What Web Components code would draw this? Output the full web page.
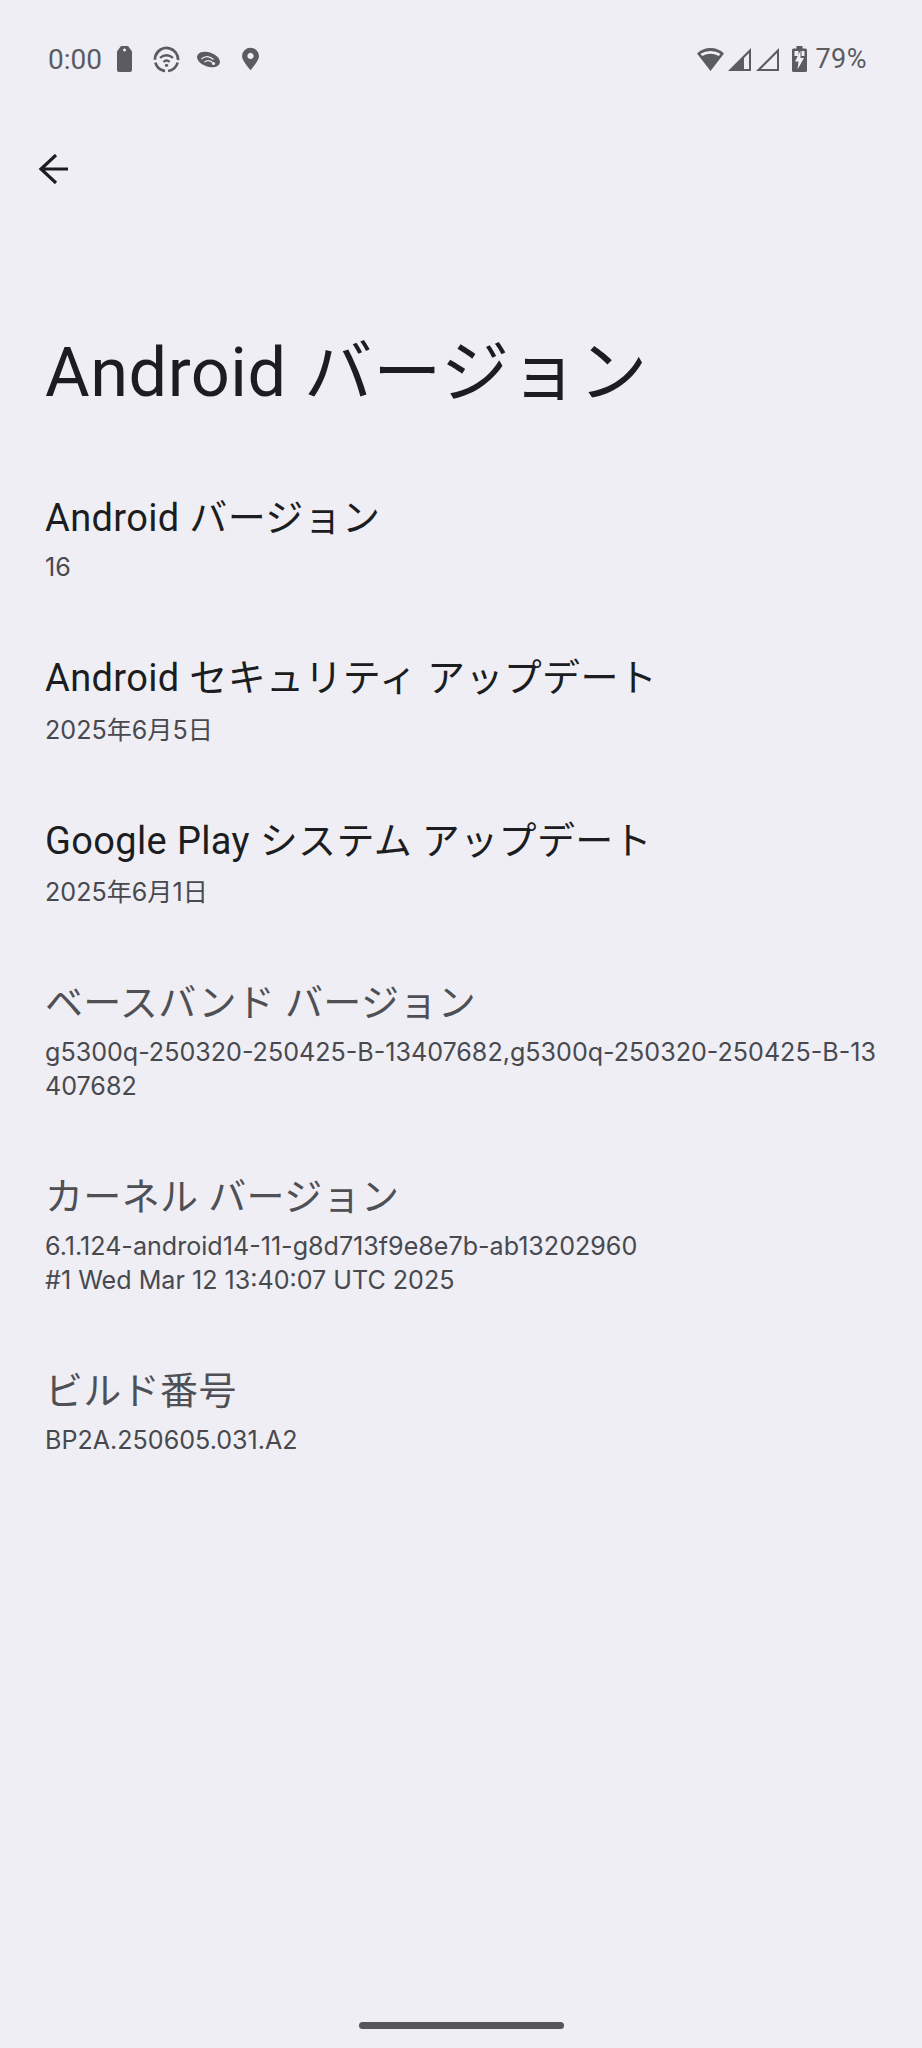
<!DOCTYPE html>
<html lang="ja">
<head>
<meta charset="UTF-8">
<title>Android バージョン</title>
<style>
  html, body { margin: 0; background: #eeeef4; }
  body { font-family: Roboto, "Noto Sans CJK JP", sans-serif; }
</style>
</head>
<body>
<template id="status-tpl">
  <style>
    :host { display: flex; align-items: center; justify-content: space-between; height: 46px; padding: 36px 55px 36px 48px; color: #5a5c62; }
    .side { display: flex; align-items: center; }
    .time { font-size: 28px; margin-right: 15px; }
    .pct { font-size: 27px; margin-left: 8px; letter-spacing: .5px; }
    svg { display: block; fill: currentColor; }
  </style>
  <div class="side">
    <span class="time">0:00</span>
    <svg width="15" height="26" viewBox="0 0 15 26" style="margin-right:21px"><path fill-rule="evenodd" d="M4 0h7l3 4q1 1 1 2v18q0 2-2 2H2q-2 0-2-2V6q0-1 1-2zM7.500 2.500a1.500 1.500 0 1 0 .01 0z"/></svg>
    <svg width="27" height="27" viewBox="0 0 28 28" style="margin-right:17px"><circle cx="14" cy="14" r="12" fill="none" stroke="currentColor" stroke-width="2.800" stroke-dasharray="14 3 14 3 38.400 3" transform="rotate(15 14 14)"/><path d="M6.500 11.500q7.500-6.500 15 0l-1.500 1.800q-6-5-12 0zM10 15.500q4-3.300 8 0l-1.500 1.800q-2.500-2-5 0z"/><circle cx="14" cy="20" r="1.700"/></svg>
    <svg width="23" height="17" viewBox="0 0 23 17" style="margin-right:22px"><ellipse cx="11.500" cy="8.500" rx="11.800" ry="7.200" transform="rotate(18 11.500 8.500)"/><path d="M4.500 8q5.500-5 12 .5M7.500 11q4-3 8 .5" fill="none" stroke="#eeeef4" stroke-width="1.300"/><circle cx="16.500" cy="12.500" r="1.600" fill="#eeeef4"/></svg>
    <svg width="17" height="24" viewBox="0 0 18 24"><path fill-rule="evenodd" d="M9 0a9 9 0 0 1 9 9Q18 13 9 24 0 13 0 9A9 9 0 0 1 9 0zM9 5.500a3.300 3.300 0 1 0 .01 0z"/></svg>
  </div>
  <div class="side">
    <svg width="27" height="23" viewBox="0 0 27 23" style="margin-right:4px"><path fill-rule="evenodd" d="M13.500 0q8 0 13.500 5.500L13.500 23 0 5.500Q5.500 0 13.500 0zM13.500 3q-5.500 0-10 2.700l1.700 2.300q8.300-4.500 16.600 0l1.700-2.300q-4.500-2.700-10-2.700z"/></svg>
    <svg width="23" height="23" viewBox="0 0 23 23" style="margin-right:5px"><path fill-rule="evenodd" d="M23 0v23H0zM21 5l-5 5v11h5z"/></svg>
    <svg width="23" height="23" viewBox="0 0 23 23" style="margin-right:13px"><path fill-rule="evenodd" d="M23 0v23H0zM21 5L5 21h16z"/></svg>
    <svg width="15" height="26" viewBox="0 0 15 26"><path fill-rule="evenodd" d="M4.500 0h6v2.500h3q1.500 0 1.500 1.500v20.500q0 1.500-1.500 1.500h-12Q0 26 0 24.500V4q0-1.500 1.500-1.500h3zM2.500 5h4v5h-4zM9.500 5h3v5h-3z"/><path d="M8.500 4.500l-5.500 11h3.500l-1 8 6.500-11.500H8.500z" fill="#eeeef4"/></svg>
    <span class="pct">79%</span>
  </div>
</template>

<template id="back-tpl">
  <style>
    :host { display: block; width: 31px; height: 30px; margin: 36px 0 0 38px; color: #1c1d21; }
    svg { display: block; }
  </style>
  <svg width="31" height="30" viewBox="0 0 31 30" fill="none" stroke="currentColor" stroke-width="3.200"><path d="M30 15H3M18 1L3 15l15 14"/></svg>
</template>

<template id="title-tpl">
  <style>
    :host { display: block; margin: 144px 46px 0 45px; font-size: 68.500px; letter-spacing: .5px; line-height: 90px; color: #1c1d21; }
  </style>
  <slot></slot>
</template>

<template id="row-tpl">
  <style>
    :host { display: block; padding: 0 44px 0 45px; color: #1c1d21; }
    :host([disabled]) { color: #4f5055; }
    .label { font-size: 38px; letter-spacing: .36px; line-height: 50px; }
    .value { font-family: Inter, "Noto Sans CJK JP", sans-serif; font-size: 25.100px; line-height: 34px; color: #48494e; margin-top: 7px; word-break: break-all; }
    :host([dated]) .value { margin-top: 9.500px; }
  </style>
  <div class="label"><slot name="label"></slot></div>
  <div class="value"><slot name="value"></slot></div>
</template>

<template id="list-tpl">
  <style>
    :host { display: flex; flex-direction: column; gap: 69px; margin-top: 75px; }
  </style>
  <slot></slot>
</template>

<template id="nav-tpl">
  <style>
    :host { position: absolute; left: 359px; top: 2022px; width: 205px; height: 7px; border-radius: 4px; background: #55565b; }
  </style>
</template>

<status-bar></status-bar>
<back-button></back-button>
<page-title>Android バージョン</page-title>
<info-list>
  <info-row><span slot="label">Android バージョン</span><span slot="value">16</span></info-row>
  <info-row dated><span slot="label">Android セキュリティ アップデート</span><span slot="value">2025年6月5日</span></info-row>
  <info-row dated><span slot="label">Google Play システム アップデート</span><span slot="value">2025年6月1日</span></info-row>
  <info-row disabled><span slot="label">ベースバンド バージョン</span><span slot="value">g5300q-250320-250425-B-13407682,g5300q-250320-250425-B-13407682</span></info-row>
  <info-row disabled><span slot="label">カーネル バージョン</span><span slot="value">6.1.124-android14-11-g8d713f9e8e7b-ab13202960<br>#1 Wed Mar 12 13:40:07 UTC 2025</span></info-row>
  <info-row disabled><span slot="label">ビルド番号</span><span slot="value">BP2A.250605.031.A2</span></info-row>
</info-list>
<nav-handle></nav-handle>

<script>
  function simple(tag, tplId) {
    customElements.define(tag, class extends HTMLElement {
      constructor() {
        super();
        this.attachShadow({ mode: 'open' });
        this.shadowRoot.appendChild(document.getElementById(tplId).content.cloneNode(true));
      }
    });
  }
  simple('status-bar', 'status-tpl');
  simple('back-button', 'back-tpl');
  simple('page-title', 'title-tpl');
  simple('info-row', 'row-tpl');
  simple('info-list', 'list-tpl');
  simple('nav-handle', 'nav-tpl');
</script>
</body>
</html>
